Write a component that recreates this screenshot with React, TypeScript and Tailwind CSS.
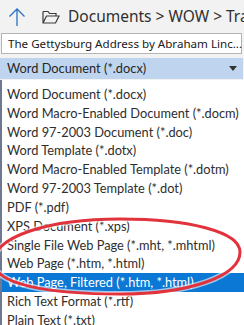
import React from 'react'

const ITEMS = [
  'Word Document (*.docx)',
  'Word Macro-Enabled Document (*.docm)',
  'Word 97-2003 Document (*.doc)',
  'Word Template (*.dotx)',
  'Word Macro-Enabled Template (*.dotm)',
  'Word 97-2003 Template (*.dot)',
  'PDF (*.pdf)',
  'XPS Document (*.xps)',
  'Single File Web Page (*.mht, *.mhtml)',
  'Web Page (*.htm, *.html)',
  'Web Page, Filtered (*.htm, *.html)',
  'Rich Text Format (*.rtf)',
  'Plain Text (*.txt)',
]

const SELECTED = 10

const listFont = { fontFamily: 'Lato, "Noto Sans", sans-serif' }

export default function App() {
  return (
    <div
      className="relative w-[244px] h-[325px] overflow-hidden bg-[#f2f2f2] text-[#262626]"
      style={{ fontFamily: '"Noto Sans", "Open Sans", sans-serif' }}
    >
      {/* path bar */}
      <div className="flex h-[33px] items-center whitespace-nowrap">
        <svg className="ml-[8px] h-[20px] w-[18px] shrink-0" viewBox="0 0 18 20" fill="none" stroke="#2a73c0" strokeWidth="1.3">
          <path d="M9 19V2M1.5 9.5L9 2l7.5 7.5" />
        </svg>
        <svg className="ml-[16px] h-[14px] w-[18px] shrink-0" viewBox="0 0 18 14" fill="none" stroke="#3a3a3a" strokeWidth="1.2">
          <path d="M1 1.5h5l1.5 2H14v2.5" />
          <path d="M1 1.5V13h12.5L17 6H4.5L1 13" />
        </svg>
        <span className="ml-[8px] text-[15.5px] text-[#303030]">Documents &gt; WOW &gt; Transcripts</span>
      </div>

      {/* filename */}
      <div className="ml-[1px] flex h-[21px] w-[241px] items-center border border-[#b4b4b4] bg-white pl-[6px] text-[11.6px] text-[#202020] whitespace-nowrap">
        The Gettysburg Address by Abraham Linc...
      </div>

      {/* type dropdown */}
      <div
        className="mt-[4px] flex h-[21px] w-[243px] items-center justify-between bg-[#bfd5ef] pl-[7px] pr-[6px] text-[12.8px] text-[#262626]"
        style={listFont}
      >
        <span>Word Document (*.docx)</span>
        <svg className="h-[5px] w-[8px]" viewBox="0 0 8 5">
          <path d="M0 0h8L4 5z" fill="#333" />
        </svg>
      </div>

      {/* list */}
      <div className="mt-[1px] border-l-[2px] border-[#6e7890] bg-white pt-[5px]" style={listFont}>
        {ITEMS.map((label, i) => (
          <div
            key={label}
            className={
              'flex h-[18.85px] items-center pl-[5px] text-[12.8px] whitespace-nowrap ' +
              (i === SELECTED ? 'bg-[#0a78d4] text-white' : 'text-[#2e2e2e]')
            }
          >
            {label}
          </div>
        ))}
      </div>

      {/* hand-drawn annotation */}
      <svg className="pointer-events-none absolute left-0 top-0 h-[325px] w-[244px]" viewBox="0 0 244 325" fill="none">
        <path
          d="M-6 262C-6 236 50 219 120 219C190 219 240 232 240 252C240 276 190 294 120 294C50 294 -6 285 -6 262Z"
          stroke="#ffffff"
          strokeOpacity="0.6"
          strokeWidth="6"
        />
        <path
          d="M-6 262C-6 236 50 219 120 219C190 219 240 232 240 252C240 276 190 294 120 294C50 294 -6 285 -6 262Z"
          stroke="#e2323c"
          strokeWidth="3"
        />
      </svg>
    </div>
  )
}
